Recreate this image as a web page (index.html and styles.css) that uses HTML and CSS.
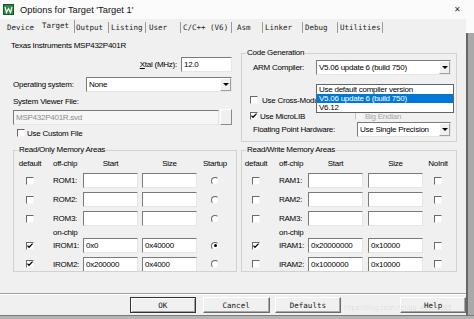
FILE: index.html
```html
<!DOCTYPE html>
<html lang="en">
<head>
  <meta charset="utf-8">
  <title>Options for Target 'Target 1'</title>
  <link rel="stylesheet" href="styles.css">
</head>
<body>
<div class="window">
  <div class="titlebar">
    <svg class="app-icon" width="11" height="11" viewBox="0 0 11 11">
      <rect x="0.5" y="0.5" width="10" height="10" fill="#2b8a3e" stroke="#145a26"/>
      <polyline points="2,3 3.5,8.5 5.5,4.5 7.5,8.5 9,3" fill="none" stroke="#fff" stroke-width="1.2"/>
    </svg>
    <span class="title">Options for Target 'Target 1'</span>
    <span class="close">&#x2715;</span>
  </div>

  <div class="frame">
    <div class="dialog">
      <div class="tabs">
        <span class="tab t-device">Device</span>
        <span class="tab t-target selected">Target</span>
        <span class="tab t-output">Output</span>
        <span class="tab t-listing">Listing</span>
        <span class="tab t-user">User</span>
        <span class="tab t-cc">C/C++ (V6)</span>
        <span class="tab t-asm">Asm</span>
        <span class="tab t-linker">Linker</span>
        <span class="tab t-debug">Debug</span>
        <span class="tab t-util">Utilities</span>
      </div>

      <div class="top">
        <div class="device-col">
          <div class="vendor">Texas Instruments MSP432P401R</div>
          <div class="row xtal-row">
            <span><u>X</u>tal (MHz):</span>
            <span class="field xtal">12.0</span>
          </div>
          <div class="row os-row">
            <span class="os-label">Operating system:</span>
            <span class="field combo os">None<span class="combo-btn"></span></span>
          </div>
          <div class="svf-label">System Viewer File:</div>
          <div class="row svf-row">
            <span class="field disabled svf">MSP432P401R.svd</span>
            <span class="browse"></span>
          </div>
          <div class="row check-row custom"><span class="check"></span>Use Custom File</div>
        </div>

        <fieldset class="group codegen">
          <legend>Code Generation</legend>
          <div class="row arm-row">
            <span class="arm-label">ARM Compiler:</span>
            <span class="field combo arm">V5.06 update 6 (build 750)<span class="combo-btn"></span></span>
          </div>
          <div class="row check-row cross"><span class="check"></span>Use Cross-Module Optimization</div>
          <div class="row check-row micro">
            <span class="micro-item"><span class="check on"><svg width="6" height="6" viewBox="0 0 6 6"><path d="M0.4 2.6 L2 4.3 L5.6 0.6" fill="none" stroke="#000" stroke-width="1.3"/></svg></span>Use MicroLIB</span>
            <span class="micro-item off"><span class="check dim"></span>Big Endian</span>
          </div>
          <div class="row fph-row">
            <span class="fph-label">Floating Point Hardware:</span>
            <span class="field combo fph">Use Single Precision<span class="combo-btn"></span></span>
          </div>

          <ul class="droplist">
            <li>Use default compiler version</li>
            <li class="hl">V5.06 update 6 (build 750)</li>
            <li>V6.12</li>
          </ul>
        </fieldset>
      </div>

      <div class="memory">
        <fieldset class="group rom">
          <legend>Read/Only Memory Areas</legend>
          <div class="mrow head">
            <span class="mid">default</span><span class="lbl">off-chip</span>
            <span class="hcell">Start</span><span class="hcell">Size</span><span class="mid">Startup</span>
          </div>
          <div class="mrow first">
            <span class="mid"><span class="check"></span></span><span class="lbl">ROM1:</span>
            <span class="field cell"></span><span class="field cell"></span><span class="mid"><span class="radio"></span></span>
          </div>
          <div class="mrow">
            <span class="mid"><span class="check"></span></span><span class="lbl">ROM2:</span>
            <span class="field cell"></span><span class="field cell"></span><span class="mid"><span class="radio"></span></span>
          </div>
          <div class="mrow">
            <span class="mid"><span class="check"></span></span><span class="lbl">ROM3:</span>
            <span class="field cell"></span><span class="field cell"></span><span class="mid"><span class="radio"></span></span>
          </div>
          <div class="mrow onchip"><span></span><span class="lbl">on-chip</span></div>
          <div class="mrow irow">
            <span class="mid"><span class="check on"><svg width="6" height="6" viewBox="0 0 6 6"><path d="M0.4 2.6 L2 4.3 L5.6 0.6" fill="none" stroke="#000" stroke-width="1.3"/></svg></span></span><span class="lbl">IROM1:</span>
            <span class="field cell">0x0</span><span class="field cell">0x40000</span><span class="mid"><span class="radio on"></span></span>
          </div>
          <div class="mrow last">
            <span class="mid"><span class="check on"><svg width="6" height="6" viewBox="0 0 6 6"><path d="M0.4 2.6 L2 4.3 L5.6 0.6" fill="none" stroke="#000" stroke-width="1.3"/></svg></span></span><span class="lbl">IROM2:</span>
            <span class="field cell">0x200000</span><span class="field cell">0x4000</span><span class="mid"><span class="radio"></span></span>
          </div>
        </fieldset>

        <fieldset class="group ram">
          <legend>Read/Write Memory Areas</legend>
          <div class="mrow head">
            <span class="mid">default</span><span class="lbl">off-chip</span>
            <span class="hcell">Start</span><span class="hcell">Size</span><span class="mid">NoInit</span>
          </div>
          <div class="mrow first">
            <span class="mid"><span class="check"></span></span><span class="lbl">RAM1:</span>
            <span class="field cell"></span><span class="field cell"></span><span class="mid"><span class="check"></span></span>
          </div>
          <div class="mrow">
            <span class="mid"><span class="check"></span></span><span class="lbl">RAM2:</span>
            <span class="field cell"></span><span class="field cell"></span><span class="mid"><span class="check"></span></span>
          </div>
          <div class="mrow">
            <span class="mid"><span class="check"></span></span><span class="lbl">RAM3:</span>
            <span class="field cell"></span><span class="field cell"></span><span class="mid"><span class="check"></span></span>
          </div>
          <div class="mrow onchip"><span></span><span class="lbl">on-chip</span></div>
          <div class="mrow irow">
            <span class="mid"><span class="check on"><svg width="6" height="6" viewBox="0 0 6 6"><path d="M0.4 2.6 L2 4.3 L5.6 0.6" fill="none" stroke="#000" stroke-width="1.3"/></svg></span></span><span class="lbl">IRAM1:</span>
            <span class="field cell">0x20000000</span><span class="field cell">0x10000</span><span class="mid"><span class="check"></span></span>
          </div>
          <div class="mrow last">
            <span class="mid"><span class="check"></span></span><span class="lbl">IRAM2:</span>
            <span class="field cell">0x1000000</span><span class="field cell">0x10000</span><span class="mid"><span class="check"></span></span>
          </div>
        </fieldset>
      </div>

      <div class="buttons">
        <span class="btn default">OK</span>
        <span class="btn cancel">Cancel</span>
        <span class="btn defaults">Defaults</span>
        <span class="btn help">Help</span>
        <span class="watermark">https://blog.csdn.net/qq_42902183</span>
      </div>
    </div>
    <div class="backdrop"></div>
  </div>
</div>
</body>
</html>
```

FILE: styles.css
```css
body {
  margin: 0;
  width: 474px;
  height: 319px;
  overflow: hidden;
  background: #b4b4b4;
  font-family: "Liberation Sans", Arial, sans-serif;
  font-size: 8px;
  letter-spacing: -0.25px;
  color: #000;
}
.window {
  height: 315px;
  border-bottom: 1px solid #7a7a7a;
  background: #f0f0f0;
  display: flex;
  flex-direction: column;
}

/* title bar */
.titlebar {
  height: 19px;
  flex: none;
  display: flex;
  align-items: center;
  background: #fbfbfb;
}
.app-icon {
  margin-left: 3px;
  flex: none;
}
.title {
  margin-left: 6px;
  font-size: 9.3px;
  letter-spacing: 0;
  color: #111;
}
.close {
  margin-left: auto;
  margin-right: 13px;
  font-size: 8px;
  color: #333;
}

.frame {
  flex: 1;
  display: flex;
  background: #fbfbfb;
}
.dialog {
  width: 466px;
  flex: none;
  display: flex;
  flex-direction: column;
  position: relative;
  background: #f0f0f0;
}
.backdrop {
  flex: 1;
  margin-top: 14px;
  border-left: 2px solid #666;
  background: #a9a9a9;
}

/* tabs */
.tabs {
  height: 16px;
  flex: none;
  display: flex;
  align-items: flex-start;
  padding-left: 4px;
  font-family: "DejaVu Sans Mono", monospace;
  font-size: 7.5px;
  letter-spacing: 0;
  color: #222;
}
.tab {
  margin-top: 3px;
  height: 11px;
  line-height: 11px;
  box-sizing: border-box;
  border-right: 1px solid #999;
  white-space: nowrap;
}
.tab.selected {
  margin-top: 1px;
  height: 13px;
}
.t-device { width: 36px; padding-left: 3px; border-right: none; }
.t-target { width: 35px; padding-left: 2px; }
.t-output { width: 34px; padding-left: 1px; }
.t-listing { width: 37px; padding-left: 2px; }
.t-user { width: 35px; padding-left: 3px; }
.t-cc { width: 51px; padding-left: 2px; }
.t-asm { width: 31px; padding-left: 5px; }
.t-linker { width: 40px; padding-left: 2px; }
.t-debug { width: 35px; padding-left: 2px; }
.t-util { width: 45px; padding-left: 2px; }

/* generic controls */
.row {
  display: flex;
  align-items: center;
}
.field {
  height: 15px;
  box-sizing: border-box;
  background: #fff;
  border: 1px solid;
  border-color: #7a7a7a #e6e6e6 #e6e6e6 #7a7a7a;
  line-height: 13px;
  padding-left: 2px;
  white-space: nowrap;
  overflow: hidden;
}
.field.disabled {
  background: #f6f6f6;
  color: #8c8c8c;
}
.combo {
  display: flex;
  align-items: center;
}
.combo-btn {
  margin-left: auto;
  width: 11px;
  height: 13px;
  box-sizing: border-box;
  border: 1px solid;
  border-color: #fff #a0a0a0 #a0a0a0 #fff;
  background: #f0f0f0;
  display: flex;
  align-items: center;
  justify-content: center;
  flex: none;
}
.combo-btn::after {
  content: "";
  border-left: 3px solid transparent;
  border-right: 3px solid transparent;
  border-top: 3px solid #000;
}
.check {
  width: 8px;
  height: 8px;
  box-sizing: border-box;
  border: 1px solid;
  border-color: #6a6a6a #f4f4f4 #f4f4f4 #6a6a6a;
  background: #fff;
  flex: none;
  display: inline-flex;
  align-items: center;
  justify-content: center;
}
.check.dim {
  border-color: #c4c4c4 #f4f4f4 #f4f4f4 #c4c4c4;
  background: #f4f4f4;
}
.radio {
  width: 8px;
  height: 8px;
  box-sizing: border-box;
  border-radius: 50%;
  border: 1px solid;
  border-color: #6a6a6a #f0f0f0 #f0f0f0 #6a6a6a;
  background: #fff;
  display: inline-flex;
  align-items: center;
  justify-content: center;
}
.radio.on::after {
  content: "";
  width: 3px;
  height: 3px;
  border-radius: 50%;
  background: #000;
}
.check-row {
  height: 10px;
  gap: 4px;
}

/* upper section */
.top {
  display: flex;
  align-items: flex-start;
}
.device-col {
  width: 226px;
  margin-left: 11px;
}
.vendor {
  margin-top: 6px;
  line-height: 10px;
}
.xtal-row {
  margin-top: 6px;
  justify-content: flex-end;
  padding-right: 5px;
  gap: 4px;
}
.xtal { width: 51px; }
.os-row { margin-top: 5px; }
.os-label {
  width: 75px;
  padding-left: 2px;
  box-sizing: border-box;
}
.os { width: 146px; }
.svf-label {
  margin-top: 5px;
  line-height: 10px;
  padding-left: 2px;
}
.svf-row {
  margin-top: 2px;
  padding-left: 2px;
}
.svf { width: 206px; }
.browse {
  width: 12px;
  height: 16px;
  margin-left: 1px;
  box-sizing: border-box;
  border: 1px solid;
  border-color: #fff #8a8a8a #8a8a8a #fff;
  background: #f0f0f0;
}
.custom {
  margin-top: 3px;
  padding-left: 6px;
  gap: 2px;
}

/* group boxes */
.group {
  margin: 0;
  padding: 0;
  box-sizing: border-box;
  border: 1px solid #d2d2d2;
  min-inline-size: 0;
}
.group legend {
  padding: 0 1px;
  margin-left: 4px;
  line-height: 10px;
}
.codegen {
  width: 216px;
  margin: 13px 0 0 4px;
  padding-bottom: 4px;
  position: relative;
}
.arm-row {
  margin-top: 2px;
  padding-left: 11px;
}
.arm-label { width: 63px; }
.arm { width: 135px; }
.cross {
  margin-top: 20px;
  padding-left: 8px;
}
.micro {
  margin-top: 6px;
  padding-left: 8px;
}
.micro-item {
  width: 110px;
  display: flex;
  align-items: center;
  gap: 2px;
}
.micro-item.off { color: #a6a6a6; }
.fph-row {
  margin-top: 1px;
  padding-left: 11px;
}
.fph-label { width: 104px; }
.fph { width: 94px; }

.droplist {
  position: absolute;
  left: 74px;
  top: 26px;
  width: 138px;
  margin: 0;
  padding: 0;
  list-style: none;
  box-sizing: border-box;
  border: 1px solid #646464;
  background: #fff;
}
.droplist li {
  height: 9px;
  line-height: 9px;
  padding-left: 2px;
  white-space: nowrap;
}
.droplist li.hl {
  background: #0078d7;
  color: #fff;
}

/* memory areas */
.memory {
  display: flex;
  gap: 4px;
  margin-top: 3px;
  padding-left: 13px;
}
.rom { width: 224px; }
.ram { width: 216px; }
.mrow {
  display: grid;
  align-items: center;
  height: 15px;
  margin-top: 4px;
}
.rom .mrow { grid-template-columns: 32px 37px 59px 59px 28px; }
.ram .mrow { grid-template-columns: 28px 38px 60px 55px 30px; }
.rom .lbl { padding-left: 7px; }
.ram .lbl { padding-left: 9px; }
.mrow.head {
  height: 10px;
  margin-top: 3px;
}
.mrow.first { margin-top: 5px; }
.mrow.onchip {
  height: 10px;
  margin-top: 1px;
}
.mrow.irow { margin-top: 1px; }
.mrow.last { height: 14px; }
.mrow.last .field { height: 14px; border-bottom: none; }
.mid {
  display: flex;
  justify-content: center;
  white-space: nowrap;
}
.hcell {
  width: 55px;
  text-align: center;
}
.cell { width: 55px; }

/* bottom buttons */
.buttons {
  margin-top: 21px;
  border-top: 1px solid #a0a0a0;
  box-shadow: inset 0 1px #fff;
  padding: 3px 0 0 130px;
  display: flex;
  font-family: "DejaVu Sans Mono", monospace;
  font-size: 7.5px;
  letter-spacing: 0;
  position: relative;
}
.btn {
  width: 66px;
  height: 16px;
  box-sizing: border-box;
  border: 1px solid;
  border-color: #fff #6a6a6a #6a6a6a #fff;
  box-shadow: inset -1px -1px #a8a8a8;
  display: flex;
  align-items: center;
  justify-content: center;
  color: #111;
}
.btn.default {
  border-color: #333;
  box-shadow: inset 1px 1px #fff, inset -1px -1px #a0a0a0;
}
.cancel { margin-left: 7px; width: 67px; }
.defaults { margin-left: 5px; width: 67px; }
.help { margin-left: 59px; }
.watermark {
  position: absolute;
  left: 344px;
  top: 10px;
  font-family: "Liberation Sans", Arial, sans-serif;
  font-size: 7px;
  color: rgba(0, 0, 0, 0.1);
  white-space: nowrap;
}
```
